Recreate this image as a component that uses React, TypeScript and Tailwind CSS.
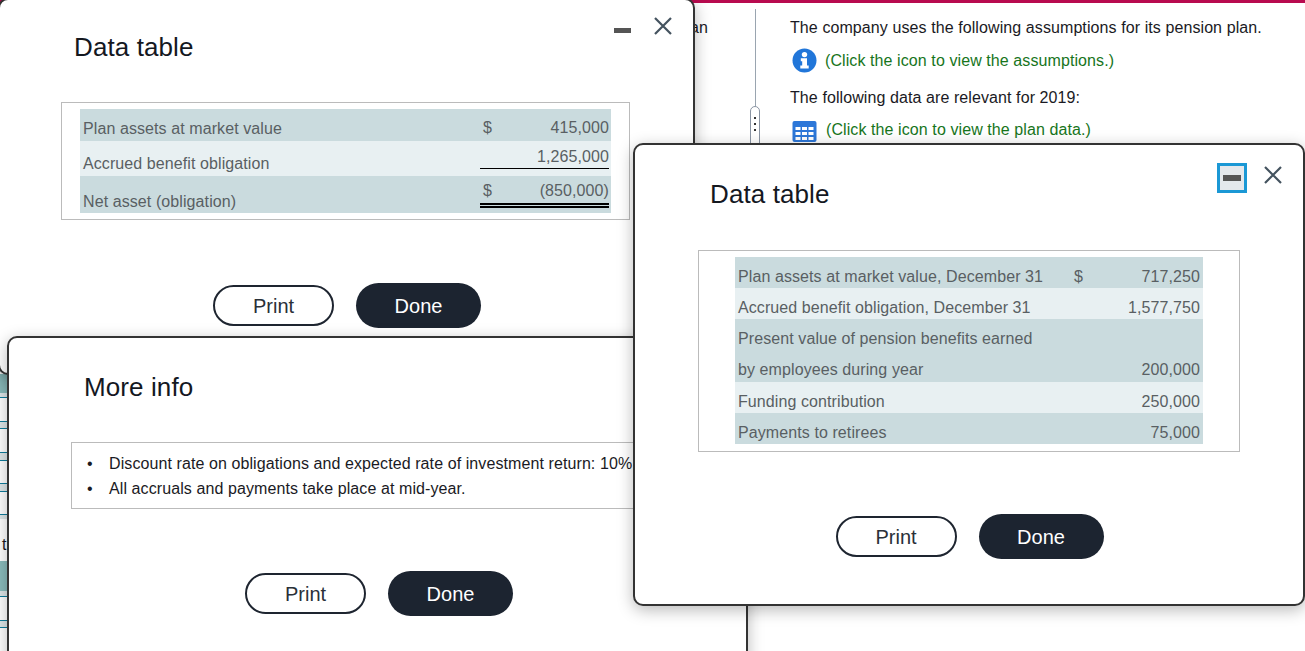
const stripBands = [
  { h: 19, c: "bg-[#8abcbc]" },
  { h: 4, c: "bg-[#dde6e8]" },
  { h: 1, c: "bg-[#0f7c9c]" },
  { h: 23, c: "bg-white" },
  { h: 1, c: "bg-[#0f7c9c]" },
  { h: 6, c: "bg-[#dde6e8]" },
  { h: 1, c: "bg-[#0f7c9c]" },
  { h: 23, c: "bg-white" },
  { h: 1, c: "bg-[#0f7c9c]" },
  { h: 7, c: "bg-[#dde6e8]" },
  { h: 1, c: "bg-[#0f7c9c]" },
  { h: 22, c: "bg-white" },
  { h: 1, c: "bg-[#0f7c9c]" },
  { h: 7, c: "bg-[#dde6e8]" },
  { h: 1, c: "bg-[#0f7c9c]" },
  { h: 22, c: "bg-white" },
  { h: 1, c: "bg-[#0f7c9c]" },
  { h: 4, c: "bg-[#dde6e8]" },
];

const stripLower = [
  { h: 30, c: "bg-[#8abcbc]" },
  { h: 5, c: "bg-[#dde6e8]" },
  { h: 1, c: "bg-[#0f7c9c]" },
  { h: 23, c: "bg-white" },
  { h: 1, c: "bg-[#0f7c9c]" },
  { h: 6, c: "bg-[#dde6e8]" },
  { h: 1, c: "bg-[#0f7c9c]" },
];

const planData = [
  { label: "Plan assets at market value, December 31", dollar: true, value: "717,250", dark: true },
  { label: "Accrued benefit obligation, December 31", value: "1,577,750" },
  { label: "Present value of pension benefits earned", value: "", dark: true },
  { label: "by employees during year", value: "200,000", dark: true, tall: true },
  { label: "Funding contribution", value: "250,000" },
  { label: "Payments to retirees", value: "75,000", dark: true },
];

function InfoIcon() {
  return (
    <svg width="25" height="25" viewBox="0 0 25 25" className="shrink-0">
      <circle cx="12.5" cy="12.5" r="12" fill="#2176d9" />
      <circle cx="12.5" cy="6.6" r="2.7" fill="#fff" />
      <path d="M8.8 10.2h6.2v7.4h1.7v3H8.3v-3h1.9v-4.4H8.8z" fill="#fff" />
    </svg>
  );
}

function GridIcon() {
  return (
    <svg width="25" height="21" viewBox="0 0 25 21" className="shrink-0">
      <rect x="0.5" y="0" width="24" height="21" rx="2" fill="#2d77d8" />
      {[6, 11, 16].map((y) =>
        [3.5, 10, 16.5].map((x) => <rect key={`${x}-${y}`} x={x} y={y} width="5" height="3" fill="#fff" />)
      )}
    </svg>
  );
}

function CloseIcon() {
  return (
    <svg width="18" height="18" viewBox="0 0 18 18" className="shrink-0">
      <path d="M1 1l16 16M17 1L1 17" stroke="#44535f" strokeWidth="2.2" fill="none" />
    </svg>
  );
}

function Buttons({ className }: { className: string }) {
  return (
    <div className={`flex items-center justify-center gap-[22px] ${className}`}>
      <button className="h-[41px] w-[121px] rounded-full border-2 border-[#1e2530] bg-white text-[20px] tracking-normal text-[#2a3038]">
        Print
      </button>
      <button className="h-[45px] w-[125px] rounded-full bg-[#1c2430] text-[20px] tracking-normal text-white">
        Done
      </button>
    </div>
  );
}

const windowClass =
  "absolute box-border rounded-[10px] border-2 border-[#333333] bg-white shadow-[0_4px_16px_rgba(0,0,0,0.28)]";

export default function App() {
  return (
    <div
      className="relative h-[651px] w-[1305px] overflow-hidden bg-white text-[16px] leading-[20px] tracking-[0.09px] text-[#1a1a24]"
      style={{ fontFamily: '"Liberation Sans", Arial, sans-serif' }}
    >
      {/* Page behind the dialogs */}
      <div className="h-[3px] bg-[#b80b4f]" />
      <div className="flex h-[648px]">
        <div className="flex w-[8px] shrink-0 flex-col pt-[371px]">
          {stripBands.map((b, i) => (
            <div key={i} className={b.c} style={{ height: b.h }} />
          ))}
          <div className="h-[42px] overflow-hidden pt-[16px] pl-[2px] leading-[20px]">t</div>
          {stripLower.map((b, i) => (
            <div key={i} className={b.c} style={{ height: b.h }} />
          ))}
        </div>

        <div className="w-[742px] shrink-0 pt-[15px] pr-[42px] text-right">an</div>

        <div className="flex w-[10px] shrink-0 flex-col items-center pt-[6px]">
          <div className="h-[97px] w-px bg-[#9aa5b0]" />
          <div className="flex h-[50px] w-[10px] flex-col items-center gap-[4px] rounded-t-[5px] border border-[#8a94a3] bg-white pt-[10px]">
            <span className="h-[2px] w-[2px] bg-[#333333]" />
            <span className="h-[2px] w-[2px] bg-[#333333]" />
            <span className="h-[2px] w-[2px] bg-[#333333]" />
          </div>
        </div>

        <div className="pt-[15px] pl-[30px]">
          <p>The company uses the following assumptions for its pension plan.</p>
          <div className="mt-[10px] flex h-[25px] items-center gap-[8px] pl-[2px] text-[#17751c]">
            <InfoIcon />
            <span>(Click the icon to view the assumptions.)</span>
          </div>
          <p className="mt-[15px]">The following data are relevant for 2019:</p>
          <div className="mt-[13px] flex h-[21px] items-start gap-[9px] pl-[2px] text-[#17751c]">
            <GridIcon />
            <span className="-mt-[1px]">(Click the icon to view the plan data.)</span>
          </div>
        </div>
      </div>

      {/* Data table, back */}
      <div className={`${windowClass} top-[-2px] left-[-2px] h-[377px] w-[697px]`}>
        <div className="absolute top-[17px] right-[21px] flex items-start gap-[23px]">
          <span className="mt-[11px] h-[5px] w-[17px] bg-[#555555]" />
          <CloseIcon />
        </div>
        <h2 className="ml-[74px] pt-[32px] text-[26px] leading-[30px] font-normal tracking-[0.1px] text-[#14181f]">
          Data table
        </h2>
        <div className="mt-[40px] ml-[61px] w-[569px] border border-[#bbbbbb] px-[18px] py-[6px] text-[#595f63]">
          <div className="flex h-[32px] bg-[#cadbde]">
            <div className="flex-1 pt-[10px] pl-[3px]">Plan assets at market value</div>
            <div className="mr-[2px] flex w-[129px] justify-between pt-[9px] pl-[3px]">
              <span>$</span>
              <span>415,000</span>
            </div>
          </div>
          <div className="flex h-[35px] bg-[#e8f0f2]">
            <div className="flex-1 pt-[13px] pl-[3px]">Accrued benefit obligation</div>
            <div className="mr-[2px] h-[28px] w-[129px] border-b border-black pt-[6px] text-right">1,265,000</div>
          </div>
          <div className="flex h-[37px] bg-[#cadbde]">
            <div className="flex-1 pt-[16px] pl-[3px]">Net asset (obligation)</div>
            <div className="mr-[2px] flex h-[32px] w-[129px] justify-between border-b-[5px] border-double border-black pt-[5px] pl-[3px]">
              <span>$</span>
              <span>(850,000)</span>
            </div>
          </div>
        </div>
        <Buttons className="mt-[63px] pl-[1px]" />
      </div>

      {/* More info */}
      <div className={`${windowClass} top-[336px] left-[7px] h-[400px] w-[741px]`}>
        <h2 className="ml-[75px] pt-[34px] text-[26px] leading-[30px] font-normal tracking-[0.1px] text-[#14181f]">
          More info
        </h2>
        <ul className="mt-[40px] ml-[62px] h-[67px] w-[613px] border border-[#bbbbbb] pt-[8px] text-[#1a1a24]">
          <li className="flex h-[25px] items-center">
            <span className="w-[37px] pl-[15px]">•</span>
            <span className="whitespace-nowrap">
              Discount rate on obligations and expected rate of investment return: 10%
            </span>
          </li>
          <li className="flex h-[25px] items-center">
            <span className="w-[37px] pl-[15px]">•</span>
            <span>All accruals and payments take place at mid-year.</span>
          </li>
        </ul>
        <Buttons className="mt-[62px] pl-[3px]" />
      </div>

      {/* Data table, front */}
      <div className={`${windowClass} top-[143px] left-[633px] h-[463px] w-[672px]`}>
        <div className="absolute top-[18px] right-[21px] flex items-start gap-[17px]">
          <span className="flex h-[30px] w-[30px] items-center justify-center border-[3px] border-[#1b98d5] bg-[#e4e8ec]">
            <span className="h-[6px] w-[18px] bg-[#555555]" />
          </span>
          <span className="mt-[3px]">
            <CloseIcon />
          </span>
        </div>
        <h2 className="ml-[75px] pt-[34px] text-[26px] leading-[30px] font-normal tracking-[0.1px] text-[#14181f]">
          Data table
        </h2>
        <div className="mt-[41px] ml-[63px] h-[202px] w-[542px] border border-[#bbbbbb] px-[36px] pt-[6px] text-[#595f63]">
          {planData.map((row) => (
            <div
              key={row.label}
              className={`flex pt-[10px] pr-[3px] pl-[3px] ${row.tall ? "h-[32px]" : "h-[31px]"} ${row.dark ? "bg-[#cadbde]" : "bg-[#e8f0f2]"}`}
            >
              <span className="w-[336px]">{row.label}</span>
              <span className="w-[20px]">{row.dollar ? "$" : ""}</span>
              <span className="flex-1 text-right">{row.value}</span>
            </div>
          ))}
        </div>
        <Buttons className="mt-[62px] pl-[1px]" />
      </div>
    </div>
  );
}
